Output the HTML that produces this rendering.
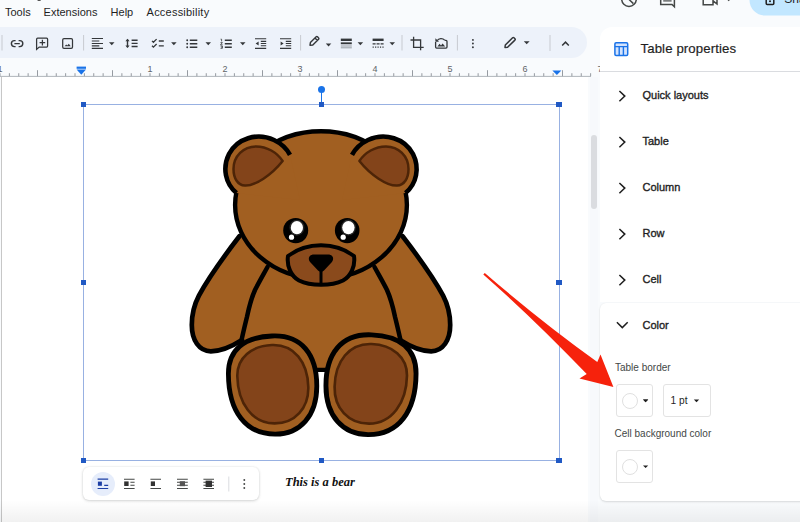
<!DOCTYPE html>
<html>
<head>
<meta charset="utf-8">
<title>Docs</title>
<style>
html,body{margin:0;padding:0;}
body{width:800px;height:522px;overflow:hidden;background:#f9fbfd;font-family:"Liberation Sans",sans-serif;position:relative;color:#1f1f1f;}
.abs{position:absolute;}
.menu{position:absolute;top:6px;font-size:11px;line-height:13px;color:#1f1f1f;white-space:nowrap;}
#toolbar{position:absolute;left:-20px;top:27px;width:607px;height:31px;border-radius:16px;background:#edf2fa;}
#page{position:absolute;left:2px;top:77px;width:586px;height:445px;background:#fff;}
#pageedge{position:absolute;left:1px;top:77px;width:1px;height:445px;background:#c7c7c7;}
#panel{position:absolute;left:600px;top:27px;width:200px;height:275px;background:#fff;border-top-left-radius:12px;}
#card{position:absolute;left:600px;top:302.5px;width:210px;height:198.5px;background:#fff;border-radius:6px 0 0 6px;box-shadow:0 1px 2px rgba(60,64,67,.17),0 0 1px rgba(60,64,67,.08);}
.sec{position:absolute;left:642.5px;font-size:11px;line-height:13px;color:#1f1f1f;-webkit-text-stroke:0.35px #1f1f1f;white-space:nowrap;}
.lbl{position:absolute;font-size:10px;line-height:12px;color:#444746;white-space:nowrap;}
.btn{position:absolute;border:1px solid #e3e3e3;border-radius:3px;background:#fff;box-sizing:border-box;}
.circ{position:absolute;width:16px;height:16px;border:1px solid #e0e0e0;border-radius:50%;box-sizing:border-box;background:#fff;}
svg{position:absolute;overflow:visible;}
.hd{position:absolute;width:5.3px;height:5.3px;background:#2059c4;}
</style>
</head>
<body>
<!-- top menu -->
<div class="menu" style="left:5px;">Tools</div>
<div class="menu" style="left:43.6px;">Extensions</div>
<div class="menu" style="left:110.6px;">Help</div>
<div class="menu" style="left:146.6px;letter-spacing:0.22px;">Accessibility</div>

<div id="toolbar"></div>
<div id="page"></div>
<div id="pageedge"></div>
<div id="panel"></div>
<div id="card"></div>

<!-- panel text -->
<div class="abs" style="left:640.5px;top:41px;font-size:13.2px;line-height:16px;color:#1f1f1f;letter-spacing:0.12px;-webkit-text-stroke:0.2px #1f1f1f;white-space:nowrap;">Table properties</div>
<div class="abs" style="left:600px;top:71px;width:200px;height:1px;background:#dadce0;"></div>
<div class="sec" style="top:89px;">Quick layouts</div>
<div class="sec" style="top:135px;">Table</div>
<div class="sec" style="top:181px;">Column</div>
<div class="sec" style="top:227px;">Row</div>
<div class="sec" style="top:273px;">Cell</div>
<div class="sec" style="top:319px;">Color</div>
<div class="lbl" style="left:615px;top:362px;">Table border</div>
<div class="lbl" style="left:614.5px;top:428px;">Cell background color</div>
<div class="btn" style="left:616px;top:384px;width:37px;height:33px;"></div>
<div class="btn" style="left:663px;top:384px;width:48px;height:33px;"></div>
<div class="btn" style="left:616px;top:450px;width:37px;height:33px;"></div>
<div class="circ" style="left:622px;top:393px;"></div>
<div class="circ" style="left:622px;top:458.5px;"></div>
<div class="lbl" style="left:670.5px;top:394.5px;font-size:10.2px;color:#1f1f1f;">1 pt</div>

<!-- toolbar icons -->
<svg id="tb" width="600" height="40" viewBox="0 24 600 40" style="left:0;top:24px;">
<g fill="none" stroke="#34373a" stroke-width="1.3">
<!-- separators -->
<g stroke="#c7cad0" stroke-width="1">
<path d="M2,35V50.5 M83.6,35V50.5 M300.6,35V50.5 M402,35V50.5 M457.4,35V50.5 M550,35V51"/>
</g>
<!-- link -->
<path d="M15.6,40.6H14.4a3,3 0 0 0 0,6H15.6 M18.6,40.6H19.8a3,3 0 0 1 0,6H18.6 M14.4,43.6H19.8" stroke-width="1.4"/>
<!-- add comment -->
<path d="M37.6,38.2H46.6a1,1 0 0 1 1,1V46a1,1 0 0 1 -1,1H39.2L36.6,49.4V39.2a1,1 0 0 1 1,-1Z M42.4,39.8V45.4 M39.6,42.6H45.2" stroke-width="1.25"/>
<!-- image -->
<rect x="62.7" y="38.6" width="9.8" height="9.8" rx="1.3" stroke-width="1.25"/>
<path d="M64.6,46.3L66.2,44.4L67.3,45.6L68.8,43.8L70.7,46.3Z" fill="#34373a" stroke="none"/>
<!-- align left -->
<path d="M91.8,38.5H103 M91.8,41H99.3 M91.8,43.45H103 M91.8,45.9H99.3 M91.8,48.4H103" stroke-width="1.15"/>
<!-- line spacing -->
<path d="M127.5,39.6V47.2 M131.6,40.2H137.6 M131.6,43.4H137.6 M131.6,46.5H137.6" stroke-width="1.4"/>
<path d="M125.4,41.2L127.5,38.7L129.6,41.2Z M125.4,45.6L127.5,48.1L129.6,45.6Z" fill="#34373a" stroke="none"/>
<!-- checklist -->
<path d="M152,40.9L153.4,42.3L156.6,39.1 M152,45.8L153.4,47.2L156.6,44 M158.8,41H163.8 M158.8,45.9H163.8" stroke-width="1.3"/>
<!-- bullets -->
<path d="M189.8,40.2H197.3 M189.8,43.7H197.3 M189.8,47.2H197.3" stroke-width="1.4"/>
<g fill="#34373a" stroke="none"><circle cx="187.2" cy="40.2" r="0.95"/><circle cx="187.2" cy="43.7" r="0.95"/><circle cx="187.2" cy="47.2" r="0.95"/></g>
<!-- numbered -->
<path d="M224.8,40.2H231.8 M224.8,43.7H231.8 M224.8,47.2H231.8" stroke-width="1.4"/>
<path d="M220.6,39.2H221.6V41.4 M220.5,42.6H222.4L220.5,44.8H222.6 M220.5,46H222.4V48.3H220.5 M221.2,47.15H222.4" stroke-width="0.8"/>
<!-- outdent -->
<path d="M255,38.7H266.2 M255,48.3H266.2 M260.8,41.3H266.2 M260.8,43.5H266.2 M260.8,45.7H266.2" stroke-width="1.15"/>
<path d="M258.6,41.5V45.5L255.6,43.5Z" fill="#34373a" stroke="none"/>
<!-- indent -->
<path d="M280,38.7H291.2 M280,48.3H291.2 M285.8,41.3H291.2 M285.8,43.5H291.2 M285.8,45.7H291.2" stroke-width="1.15"/>
<path d="M280.6,41.5V45.5L283.6,43.5Z" fill="#34373a" stroke="none"/>
<!-- pencil (border colour) -->
<path d="M310,45.2L310.4,42.6L316.2,36.8a0.9,0.9 0 0 1 1.3,0L318.6,37.9a0.9,0.9 0 0 1 0,1.3L312.8,45L310,45.2Z M315,38L317.4,40.4" stroke-width="1.4" stroke-linejoin="round"/>
<!-- border weight -->
<path d="M340.8,39.8H351.8" stroke-width="2.4"/>
<path d="M340.8,43.3H351.8" stroke-width="1.9"/>
<path d="M340.8,46H351.8 M340.8,47.8H351.8" stroke-width="0.8" stroke="#80868b"/>
<!-- border dash -->
<path d="M372.6,39.8H383.6" stroke-width="2.4"/>
<path d="M372.6,43.8H383.6" stroke-width="1.3" stroke-dasharray="3 1"/>
<path d="M372.6,47.2H383.6" stroke-width="1.2" stroke-dasharray="1.2 1.25"/>
<!-- crop -->
<path d="M413.6,36.8V47.3H423.7 M410.5,40H420.6V50.2" stroke-width="1.3"/>
<!-- replace image -->
<path d="M435.6,42V47.1a1,1 0 0 0 1,1H446a1,1 0 0 0 1,-1V41.4a1,1 0 0 0 -1,-1H444.6" stroke-width="1.3"/>
<path d="M437.2,40.6a4.2,3.4 0 0 1 7.4,-0.4" stroke-width="1.2"/>
<path d="M435.4,38.2V41.8H439Z" fill="#34373a" stroke="none"/>
<path d="M437.4,46.6L439.6,43.8L441,45.4L442.6,43.4L445.2,46.6Z" fill="#34373a" stroke="none"/>
<!-- more vert -->
<g fill="#34373a" stroke="none"><circle cx="472.9" cy="39.9" r="0.95"/><circle cx="472.9" cy="43.55" r="0.95"/><circle cx="472.9" cy="47.2" r="0.95"/></g>
<!-- pencil (editing) -->
<path d="M505,47.4L505.3,45L512.6,37.8a1,1 0 0 1 1.4,0L514.9,38.7a1,1 0 0 1 0,1.4L507.6,47.2L505,47.4Z" stroke-width="1.5" stroke-linejoin="round"/>
<!-- chevron up -->
<path d="M562.2,45.6L565.5,42.2L568.8,45.6" stroke-width="1.5"/>
</g>
<!-- dropdown triangles -->
<g fill="#34373a">
<path d="M109,42.3H114.5L111.75,45.2Z"/>
<path d="M171.1,42.3H176.6L173.85,45.2Z"/>
<path d="M205.5,42.3H211L208.25,45.2Z"/>
<path d="M240,42.3H245.5L242.75,45.2Z"/>
<path d="M325.8,43.6H331.3L328.55,46.5Z"/>
<path d="M357.6,42.3H363.1L360.35,45.2Z"/>
<path d="M389.5,42.3H395L392.25,45.2Z"/>
<path d="M523.8,41.2H529.6L526.7,44.2Z"/>
</g>
</svg>
<!-- ruler -->
<svg width="599.5" height="20" viewBox="0 60 599.5 20" style="left:0;top:60px;overflow:hidden;">
<rect x="0" y="75.9" width="591" height="0.9" fill="#a8adb3"/>
<rect x="-0.50" y="73.20" width="1" height="3" fill="#969ba1"/><rect x="8.88" y="73.20" width="1" height="3" fill="#969ba1"/><rect x="18.25" y="73.20" width="1" height="3" fill="#969ba1"/><rect x="27.62" y="73.20" width="1" height="3" fill="#969ba1"/><rect x="37.00" y="70.20" width="1" height="6" fill="#969ba1"/><rect x="46.38" y="73.20" width="1" height="3" fill="#969ba1"/><rect x="55.75" y="73.20" width="1" height="3" fill="#969ba1"/><rect x="65.12" y="73.20" width="1" height="3" fill="#969ba1"/><rect x="74.50" y="73.20" width="1" height="3" fill="#969ba1"/><rect x="83.88" y="73.20" width="1" height="3" fill="#969ba1"/><rect x="93.25" y="73.20" width="1" height="3" fill="#969ba1"/><rect x="102.62" y="73.20" width="1" height="3" fill="#969ba1"/><rect x="112.00" y="70.20" width="1" height="6" fill="#969ba1"/><rect x="121.38" y="73.20" width="1" height="3" fill="#969ba1"/><rect x="130.75" y="73.20" width="1" height="3" fill="#969ba1"/><rect x="140.12" y="73.20" width="1" height="3" fill="#969ba1"/><rect x="149.50" y="73.20" width="1" height="3" fill="#969ba1"/><rect x="158.88" y="73.20" width="1" height="3" fill="#969ba1"/><rect x="168.25" y="73.20" width="1" height="3" fill="#969ba1"/><rect x="177.62" y="73.20" width="1" height="3" fill="#969ba1"/><rect x="187.00" y="70.20" width="1" height="6" fill="#969ba1"/><rect x="196.38" y="73.20" width="1" height="3" fill="#969ba1"/><rect x="205.75" y="73.20" width="1" height="3" fill="#969ba1"/><rect x="215.12" y="73.20" width="1" height="3" fill="#969ba1"/><rect x="224.50" y="73.20" width="1" height="3" fill="#969ba1"/><rect x="233.88" y="73.20" width="1" height="3" fill="#969ba1"/><rect x="243.25" y="73.20" width="1" height="3" fill="#969ba1"/><rect x="252.62" y="73.20" width="1" height="3" fill="#969ba1"/><rect x="262.00" y="70.20" width="1" height="6" fill="#969ba1"/><rect x="271.38" y="73.20" width="1" height="3" fill="#969ba1"/><rect x="280.75" y="73.20" width="1" height="3" fill="#969ba1"/><rect x="290.12" y="73.20" width="1" height="3" fill="#969ba1"/><rect x="299.50" y="73.20" width="1" height="3" fill="#969ba1"/><rect x="308.88" y="73.20" width="1" height="3" fill="#969ba1"/><rect x="318.25" y="73.20" width="1" height="3" fill="#969ba1"/><rect x="327.62" y="73.20" width="1" height="3" fill="#969ba1"/><rect x="337.00" y="70.20" width="1" height="6" fill="#969ba1"/><rect x="346.38" y="73.20" width="1" height="3" fill="#969ba1"/><rect x="355.75" y="73.20" width="1" height="3" fill="#969ba1"/><rect x="365.12" y="73.20" width="1" height="3" fill="#969ba1"/><rect x="374.50" y="73.20" width="1" height="3" fill="#969ba1"/><rect x="383.88" y="73.20" width="1" height="3" fill="#969ba1"/><rect x="393.25" y="73.20" width="1" height="3" fill="#969ba1"/><rect x="402.62" y="73.20" width="1" height="3" fill="#969ba1"/><rect x="412.00" y="70.20" width="1" height="6" fill="#969ba1"/><rect x="421.38" y="73.20" width="1" height="3" fill="#969ba1"/><rect x="430.75" y="73.20" width="1" height="3" fill="#969ba1"/><rect x="440.12" y="73.20" width="1" height="3" fill="#969ba1"/><rect x="449.50" y="73.20" width="1" height="3" fill="#969ba1"/><rect x="458.88" y="73.20" width="1" height="3" fill="#969ba1"/><rect x="468.25" y="73.20" width="1" height="3" fill="#969ba1"/><rect x="477.62" y="73.20" width="1" height="3" fill="#969ba1"/><rect x="487.00" y="70.20" width="1" height="6" fill="#969ba1"/><rect x="496.38" y="73.20" width="1" height="3" fill="#969ba1"/><rect x="505.75" y="73.20" width="1" height="3" fill="#969ba1"/><rect x="515.12" y="73.20" width="1" height="3" fill="#969ba1"/><rect x="524.50" y="73.20" width="1" height="3" fill="#969ba1"/><rect x="533.88" y="73.20" width="1" height="3" fill="#969ba1"/><rect x="543.25" y="73.20" width="1" height="3" fill="#969ba1"/><rect x="552.62" y="73.20" width="1" height="3" fill="#969ba1"/><rect x="562.00" y="70.20" width="1" height="6" fill="#969ba1"/><rect x="571.38" y="73.20" width="1" height="3" fill="#969ba1"/><rect x="580.75" y="73.20" width="1" height="3" fill="#969ba1"/><rect x="590.12" y="73.20" width="1" height="3" fill="#969ba1"/>
<text x="0" y="72.2" font-size="9" text-anchor="middle" fill="#5f6368" font-family="Liberation Sans, sans-serif">1</text><text x="150" y="72.2" font-size="9" text-anchor="middle" fill="#5f6368" font-family="Liberation Sans, sans-serif">1</text><text x="225" y="72.2" font-size="9" text-anchor="middle" fill="#5f6368" font-family="Liberation Sans, sans-serif">2</text><text x="300" y="72.2" font-size="9" text-anchor="middle" fill="#5f6368" font-family="Liberation Sans, sans-serif">3</text><text x="375" y="72.2" font-size="9" text-anchor="middle" fill="#5f6368" font-family="Liberation Sans, sans-serif">4</text><text x="450" y="72.2" font-size="9" text-anchor="middle" fill="#5f6368" font-family="Liberation Sans, sans-serif">5</text><text x="525" y="72.2" font-size="9" text-anchor="middle" fill="#5f6368" font-family="Liberation Sans, sans-serif">6</text><text x="600" y="72.2" font-size="9" text-anchor="middle" fill="#5f6368" font-family="Liberation Sans, sans-serif">7</text>
<!-- left indent markers -->
<rect x="76.6" y="66.6" width="9.4" height="2.2" fill="#1a73e8"/>
<path d="M 76.6,69.6 L 86,69.6 L 81.3,74.8 Z" fill="#1a73e8"/>
<!-- right indent -->
<path d="M 552.4,70.6 L 561.4,70.6 L 556.9,75 Z" fill="#1a73e8"/>
</svg>
<!-- table selection -->
<div class="abs" style="left:83.2px;top:104.3px;width:476.5px;height:357px;border:1.4px solid #98b1e2;box-sizing:border-box;"></div>
<div class="abs" style="left:320.6px;top:91px;width:1px;height:14px;background:#1a73e8;"></div>
<div class="abs" style="left:317.6px;top:85.6px;width:7.2px;height:7.2px;border-radius:50%;background:#1a73e8;"></div>
<div class="hd" style="left:80.8px;top:102.2px;"></div>
<div class="hd" style="left:318.6px;top:102.2px;"></div>
<div class="hd" style="left:556.4px;top:102.2px;"></div>
<div class="hd" style="left:80.8px;top:280px;"></div>
<div class="hd" style="left:556.4px;top:280px;"></div>
<div class="hd" style="left:80.8px;top:458px;"></div>
<div class="hd" style="left:318.6px;top:458px;"></div>
<div class="hd" style="left:556.4px;top:458px;"></div>
<!-- bear -->
<svg id="bear" width="800" height="522" viewBox="0 0 800 522" style="left:0;top:0;">
<defs>
<g id="half">
  <path d="M 239.4,236.3 C 225,255 209,277 198.9,295.6 C 194.5,304 191.8,315 191.8,325 C 191.8,340 199,351.3 210.8,351.3 C 221,351.3 231,347 242,340" fill="none" stroke="#000" stroke-width="4.7" stroke-linecap="round"/>
  <path d="M 267.5,267 C 262,277 258,284 255,290 C 251,299 248,312 247,316.8 C 245,325 243,333 240.5,345" fill="none" stroke="#000" stroke-width="4.5" stroke-linecap="round"/>
</g>
<g id="foot">
  <path d="M 272,336 C 302,334.6 316.8,355 316.8,386 C 316.8,416 300,434.4 275,434.2 C 246,434 228.6,412 228.4,374 C 228.2,350 244,337 272,336 Z" fill="#a15f21" stroke="#000" stroke-width="4.8"/>
  <path d="M 272,345 C 294,344.2 307.8,362 308.3,387 C 308.8,408 295,423.4 274.5,423.4 C 252.5,423.4 237.8,403.5 237.3,376 C 237.1,358 251.5,345.7 272,345 Z" fill="#83441a" stroke="#4d2407" stroke-width="2.6"/>
</g>
<g id="ear">
  <path d="M 236.5,193 C 225.5,184 222,168 229,154 C 237,138.5 257,132 274,140 C 281,143.3 286.5,148.5 290,154.8 L 300,200 Z" fill="#a15f21" stroke="none"/>
  <path d="M 236.5,193 C 225.5,184 222,168 229,154 C 237,138.5 257,132 274,140 C 281,143.3 286.5,148.5 290,154.8" fill="none" stroke="#000" stroke-width="4.6" stroke-linecap="butt"/>
  <path d="M 282.6,161 C 277,152.5 267,146.4 256,146.4 C 243.5,146.4 233.5,156 233.5,169 C 233.5,178 237.5,185 245,185.6 C 255,186 271.6,175 282.6,161 Z" fill="#83441a" stroke="#4d2407" stroke-width="2.5" stroke-linejoin="round"/>
</g>
</defs>
<!-- body fill -->
<path d="M 239.4,236.3 C 225,255 209,277 198.9,295.6 C 194.5,304 191.8,315 191.8,325 C 191.8,340 199,351.3 210.8,351.3 C 221,351.3 231,347 242,340 L 280,370 L 362,370 L 400,340 C 411,347 421,351.3 431.2,351.3 C 443,351.3 450.2,340 450.2,325 C 450.2,315 447.5,304 443.1,295.6 C 433,277 417,255 402.6,236.3 Z" fill="#a15f21"/>
<path d="M 300,369.8 L 342,369.8" stroke="#000" stroke-width="4.2" fill="none"/>
<use href="#half"/>
<use href="#half" transform="translate(642,0) scale(-1,1)"/>
<use href="#foot"/>
<use href="#foot" transform="matrix(-1.0194,0,0,1.0165,648.89,-6.71)"/>
<!-- head -->
<ellipse cx="321" cy="205" rx="85.9" ry="73.8" fill="#a15f21" stroke="#000" stroke-width="4.4"/>
<use href="#ear"/>
<use href="#ear" transform="translate(642,0) scale(-1,1)"/>
<!-- muzzle -->
<path d="M 288,256 C 298,248.5 310,245.3 321,245.3 C 332,245.3 344,248.5 354,256 C 355.5,266 351,276 343,280.5 C 336,284 328,284.8 321,284.8 C 314,284.8 306,284 299,280.5 C 291,276 286.5,266 288,256 Z" fill="#8a4a1c" stroke="#000" stroke-width="4" stroke-linejoin="round"/>
<path d="M 314,254.6 L 328,254.6 C 333.5,254.6 334.5,259.5 331.5,262.5 L 324,270.5 C 322.3,272.3 319.7,272.3 318,270.5 L 310.5,262.5 C 307.5,259.5 308.5,254.6 314,254.6 Z" fill="#000"/>
<path d="M 321,268 L 321,284" stroke="#000" stroke-width="3"/>
<!-- eyes -->
<ellipse cx="295.7" cy="230.6" rx="12.5" ry="12.7" fill="#000"/>
<ellipse cx="347.2" cy="230.6" rx="12.3" ry="12.7" fill="#000"/>
<ellipse cx="296.9" cy="227.7" rx="7.5" ry="8" fill="#262626"/>
<ellipse cx="348.4" cy="227.6" rx="7.5" ry="8" fill="#262626"/>
<ellipse cx="296.9" cy="227.7" rx="6.1" ry="6.6" fill="#fff"/>
<ellipse cx="348.4" cy="227.6" rx="6.2" ry="6.6" fill="#fff"/>
<circle cx="291.5" cy="237.2" r="2.6" fill="#fff"/>
<circle cx="343.2" cy="237.2" r="2.6" fill="#fff"/>
</svg>

<!-- top right icons -->
<svg width="200" height="28" viewBox="600 0 200 28" style="left:600px;top:0;">
<path d="M749.5,-20V0a15.5,15.5 0 0 0 15.5,15.5H800V-20Z" fill="#c2e7ff"/>
<g fill="none" stroke="#444746" stroke-width="1.5">
<circle cx="629" cy="-0.9" r="7.3"/>
<path d="M629,-5V-0.6L633.4,3.6"/>
<path d="M660.7,-8V4.4H672L674.4,6.8V-8"/>
<path d="M663.2,0.9H671.6" stroke-width="1.2"/>
<path d="M703.2,-8V4.8H713V-8 M713.4,1.2L717,4V-8" />
<rect x="766.2" y="-6" width="7.6" height="10.4" rx="1" stroke="#1f1f1f"/>
</g>
<circle cx="770" cy="1.3" r="1" fill="#1f1f1f"/>
<path d="M727,-0.5H730.4L728.7,1.2Z" fill="#444746"/>
<text x="784.3" y="2.6" font-size="12" font-family="Liberation Sans, sans-serif" fill="#1f1f1f">Sha</text>
<path d="M37,-3a2,2 0 0 0 4,0" fill="none"/>
</svg>
<!-- doc title descender hint -->
<div class="abs" style="left:36.5px;top:-3px;width:4px;height:4px;border:1.3px solid #444;border-top:none;border-radius:0 0 4px 4px;box-sizing:border-box;"></div>
<!-- scrollbar -->
<div class="abs" style="left:589.6px;top:77px;width:8px;height:445px;background:#f7f9fc;"></div>
<div class="abs" style="left:590.6px;top:135px;width:6.4px;height:74px;border-radius:3.2px;background:#dadce0;"></div>
<!-- panel icon + chevrons -->
<svg width="200" height="320" viewBox="600 27 200 320" style="left:600px;top:27px;">
<rect x="614.9" y="42.7" width="12.8" height="12.8" rx="1.2" fill="#d3e3fd" stroke="#1a73e8" stroke-width="1.5"/>
<path d="M614.9,46.6H627.7 M619.2,46.6V55.5 M623.4,46.6V55.5" stroke="#1a73e8" stroke-width="1.4" fill="none"/>
<g fill="none" stroke="#1f1f1f" stroke-width="1.5">
<path d="M619.4,91L624.8,96.1L619.4,101.2"/>
<path d="M619.4,137L624.8,142.1L619.4,147.2"/>
<path d="M619.4,183L624.8,188.1L619.4,193.2"/>
<path d="M619.4,229L624.8,234.1L619.4,239.2"/>
<path d="M619.4,275L624.8,280.1L619.4,285.2"/>
<path d="M616.9,322.2L622.3,327.6L627.7,322.2"/>
</g>
<g fill="#1f1f1f">
<path d="M643,399.6H648.2L645.6,402.3Z"/>
</g>
</svg>
<svg width="200" height="120" viewBox="600 380 200 120" style="left:600px;top:380px;">
<g fill="#1f1f1f">
<path d="M643,399.6H648.2L645.6,402.3Z"/>
<path d="M693.8,399.6H699.2L696.5,402.3Z"/>
<path d="M643,465.4H648.2L645.6,468.1Z"/>
</g>
</svg>
<!-- floating toolbar -->
<div class="abs" style="left:83.4px;top:467.4px;width:175.6px;height:32.6px;border-radius:6px;background:#fff;box-shadow:0 1px 3px rgba(60,64,67,.2),0 0 2px rgba(60,64,67,.12);"></div>
<div class="abs" style="left:91px;top:471.8px;width:24px;height:24px;border-radius:50%;background:#e6edfb;"></div>
<svg width="180" height="34" viewBox="83 467 180 34" style="left:83px;top:467px;">
<g fill="none" stroke="#1d3fa5" stroke-width="1.2">
<path d="M97.6,479.2H108.2 M104.2,485.3H108.2 M97.6,488.5H108.2"/>
<rect x="97.9" y="481.6" width="4" height="4.2" fill="#1d3fa5" stroke="none"/>
</g>
<g fill="none" stroke="#444746" stroke-width="1.1">
<path d="M124,479.2H134.6 M130.4,482.2H134.6 M130.4,485.3H134.6 M124,488.5H134.6"/>
<rect x="124.2" y="481.4" width="4.4" height="4.6" fill="#333" stroke="none"/>
<path d="M150.4,479.2H161 M150.4,488.5H161"/>
<rect x="150.8" y="481.4" width="4.2" height="4.6" fill="#333" stroke="none"/>
<path d="M177,479.2H187.8 M177,482.2H187.8 M177,485.3H187.8 M177,488.5H187.8"/>
<rect x="179.8" y="481.2" width="5.2" height="5" fill="#555" stroke="none"/>
<path d="M203.4,479.2H214 M203.4,482.2H214 M203.4,485.3H214 M203.4,488.5H214"/>
<rect x="205.6" y="480.6" width="6.4" height="6.4" fill="#333" stroke="none"/>
</g>
<path d="M228.8,476.5V491.5" stroke="#dadce0" stroke-width="1"/>
<g fill="#444746"><circle cx="244.3" cy="480" r="0.95"/><circle cx="244.3" cy="484" r="0.95"/><circle cx="244.3" cy="488" r="0.95"/></g>
</svg>
<!-- red arrow -->
<svg width="200" height="160" viewBox="470 260 200 160" style="left:470px;top:260px;">
<path d="M483.3,274.4 L484.8,272.9 Q541,321.6 597.3,361.9 L600.5,354.6 L613.4,386.9 L579.5,378.6 L586.7,374.1 Q535,320 483.3,274.4 Z" fill="#f6220c"/>
</svg>
<!-- bottom fade -->
<div class="abs" style="left:0;top:500px;width:800px;height:22px;background:linear-gradient(to bottom,rgba(0,0,0,0),rgba(0,0,0,0.055));pointer-events:none;"></div>
<!-- caption -->
<div class="abs" style="left:285px;top:475px;font-family:'Liberation Serif',serif;font-weight:bold;font-style:italic;font-size:12.5px;line-height:14px;color:#111;white-space:nowrap;">This is a bear</div>

</body>
</html>
